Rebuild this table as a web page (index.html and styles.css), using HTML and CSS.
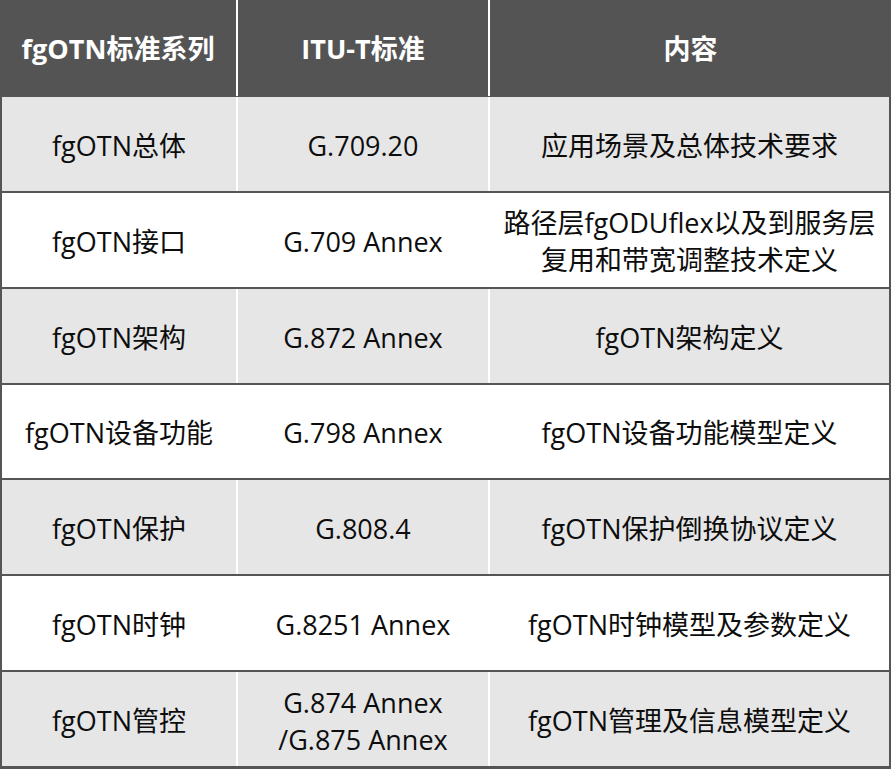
FILE: index.html
```html
<!DOCTYPE html>
<html lang="zh-CN">
<head>
<meta charset="utf-8">
<title>fgOTN标准系列</title>
<link rel="stylesheet" href="styles.css">
</head>
<body>
<div class="table">
  <div class="head">
    <div class="cell">fgOTN标准系列</div>
    <div class="cell">ITU-T标准</div>
    <div class="cell">内容</div>
  </div>
  <div class="body">
    <div class="row alt">
      <div class="cell">fgOTN总体</div>
      <div class="cell">G.709.20</div>
      <div class="cell">应用场景及总体技术要求</div>
    </div>
    <div class="row">
      <div class="cell">fgOTN接口</div>
      <div class="cell">G.709 Annex</div>
      <div class="cell">路径层fgODUflex以及到服务层<br>复用和带宽调整技术定义</div>
    </div>
    <div class="row alt">
      <div class="cell">fgOTN架构</div>
      <div class="cell">G.872 Annex</div>
      <div class="cell">fgOTN架构定义</div>
    </div>
    <div class="row">
      <div class="cell">fgOTN设备功能</div>
      <div class="cell">G.798 Annex</div>
      <div class="cell">fgOTN设备功能模型定义</div>
    </div>
    <div class="row alt">
      <div class="cell">fgOTN保护</div>
      <div class="cell">G.808.4</div>
      <div class="cell">fgOTN保护倒换协议定义</div>
    </div>
    <div class="row">
      <div class="cell">fgOTN时钟</div>
      <div class="cell">G.8251 Annex</div>
      <div class="cell">fgOTN时钟模型及参数定义</div>
    </div>
    <div class="row alt">
      <div class="cell">fgOTN管控</div>
      <div class="cell">G.874 Annex<br>/G.875 Annex</div>
      <div class="cell">fgOTN管理及信息模型定义</div>
    </div>
  </div>
</div>
</body>
</html>
```
FILE: styles.css
```css
html, body {
  margin: 0;
  padding: 0;
  background: #ffffff;
}
.table {
  width: 891px;
  height: 769px;
  background: #555555;
  font-family: "Open Sans", "Noto Sans CJK SC", sans-serif;
  font-size: 27px;
  line-height: 37px;
  display: flex;
  flex-direction: column;
}
.head {
  display: grid;
  grid-template-columns: 238px 252px 1fr;
  height: 96px;
  background: #545454;
  color: #ffffff;
  font-weight: 700;
}
.cell {
  display: flex;
  align-items: center;
  justify-content: center;
  text-align: center;
  border-right: 2px solid #ffffff;
}
.row .cell {
  padding-top: 3px;
}
.cell:last-child {
  border-right: 0;
}
.body {
  flex: 1;
  display: grid;
  grid-template-rows: repeat(7, 1fr);
  row-gap: 2px;
  padding: 1px 2px 3px 2px;
}
.row {
  display: grid;
  grid-template-columns: 236px 252px 1fr;
  background: #ffffff;
  color: #0d0d0d;
}
.row.alt {
  background: #e6e6e6;
}
```
